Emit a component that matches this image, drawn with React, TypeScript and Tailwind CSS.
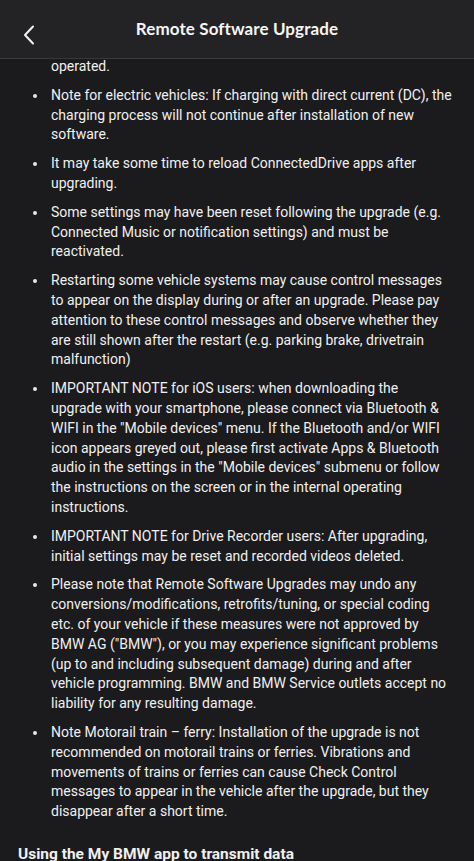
import { Fragment } from 'react'

// Each entry is one bullet; an array is a bullet whose lines are broken by hand
const ITEMS: (string | string[])[] = [
  'Note for electric vehicles: If charging with direct current (DC), the charging process will not continue after installation of new software.',
  'It may take some time to reload ConnectedDrive apps after upgrading.',
  'Some settings may have been reset following the upgrade (e.g. Connected Music or notification settings) and must be reactivated.',
  'Restarting some vehicle systems may cause control messages to appear on the display during or after an upgrade. Please pay attention to these control messages and observe whether they are still shown after the restart (e.g. parking brake, drivetrain malfunction)',
  [
    'IMPORTANT NOTE for iOS users: when downloading the',
    'upgrade with your smartphone, please connect via Bluetooth &',
    'WIFI in the "Mobile devices" menu. If the Bluetooth and/or WIFI',
    'icon appears greyed out, please first activate Apps & Bluetooth',
    'audio in the settings in the "Mobile devices" submenu or follow',
    'the instructions on the screen or in the internal operating',
    'instructions.',
  ],
  'IMPORTANT NOTE for Drive Recorder users: After upgrading, initial settings may be reset and recorded videos deleted.',
  'Please note that Remote Software Upgrades may undo any conversions/modifications, retrofits/tuning, or special coding etc. of your vehicle if these measures were not approved by BMW AG ("BMW"), or you may experience significant problems (up to and including subsequent damage) during and after vehicle programming. BMW and BMW Service outlets accept no liability for any resulting damage.',
  'Note Motorail train – ferry: Installation of the upgrade is not recommended on motorail trains or ferries. Vibrations and movements of trains or ferries can cause Check Control messages to appear in the vehicle after the upgrade, but they disappear after a short time.',
]

function BackIcon() {
  return (
    <svg width="12" height="20" viewBox="0 0 12 20" fill="none" className="block">
      <path d="M10 1.5 L2 10 L10 18.5" stroke="#f2f2f2" strokeWidth="2" strokeLinecap="round" strokeLinejoin="round" />
    </svg>
  )
}

function ItemText({ item }: { item: string | string[] }) {
  if (typeof item === 'string') return <>{item}</>
  return (
    <>
      {item.map((line, i) => (
        <Fragment key={line}>
          {i > 0 && <br />}
          <span className="whitespace-nowrap">{line}</span>
        </Fragment>
      ))}
    </>
  )
}

export default function App() {
  return (
    <div className="flex h-[861px] w-full flex-col overflow-hidden bg-[#1b1b1d] text-[#f0f0f0] [font-family:Roboto,'Noto_Sans',sans-serif]">
      <header className="relative z-10 flex h-[59px] shrink-0 items-center justify-center border-b border-[#38383a] bg-[#232325]">
        <button type="button" className="absolute left-[23px] top-[25px]">
          <BackIcon />
        </button>
        <h1 className="text-[17px] font-bold tracking-[0.1px] text-[#f5f5f5] [font-family:Lato,sans-serif]">Remote Software Upgrade</h1>
      </header>

      <main className="-mt-[2px] pl-[51px] pr-[20px] text-[14px] leading-[19.8px]">
        <p>operated.</p>
        <ul className="mt-[9px] flex flex-col gap-[9px]">
          {ITEMS.map((item, i) => (
            <li key={i} className="relative">
              <span className="absolute -left-[18px] top-[8px] h-[4px] w-[4px] rounded-full bg-[#e8e8e8]" />
              <ItemText item={item} />
            </li>
          ))}
        </ul>
        <h2 className="-ml-[33px] mt-[22px] text-[15.5px] font-bold leading-[20px]">Using the My BMW app to transmit data</h2>
      </main>
    </div>
  )
}
